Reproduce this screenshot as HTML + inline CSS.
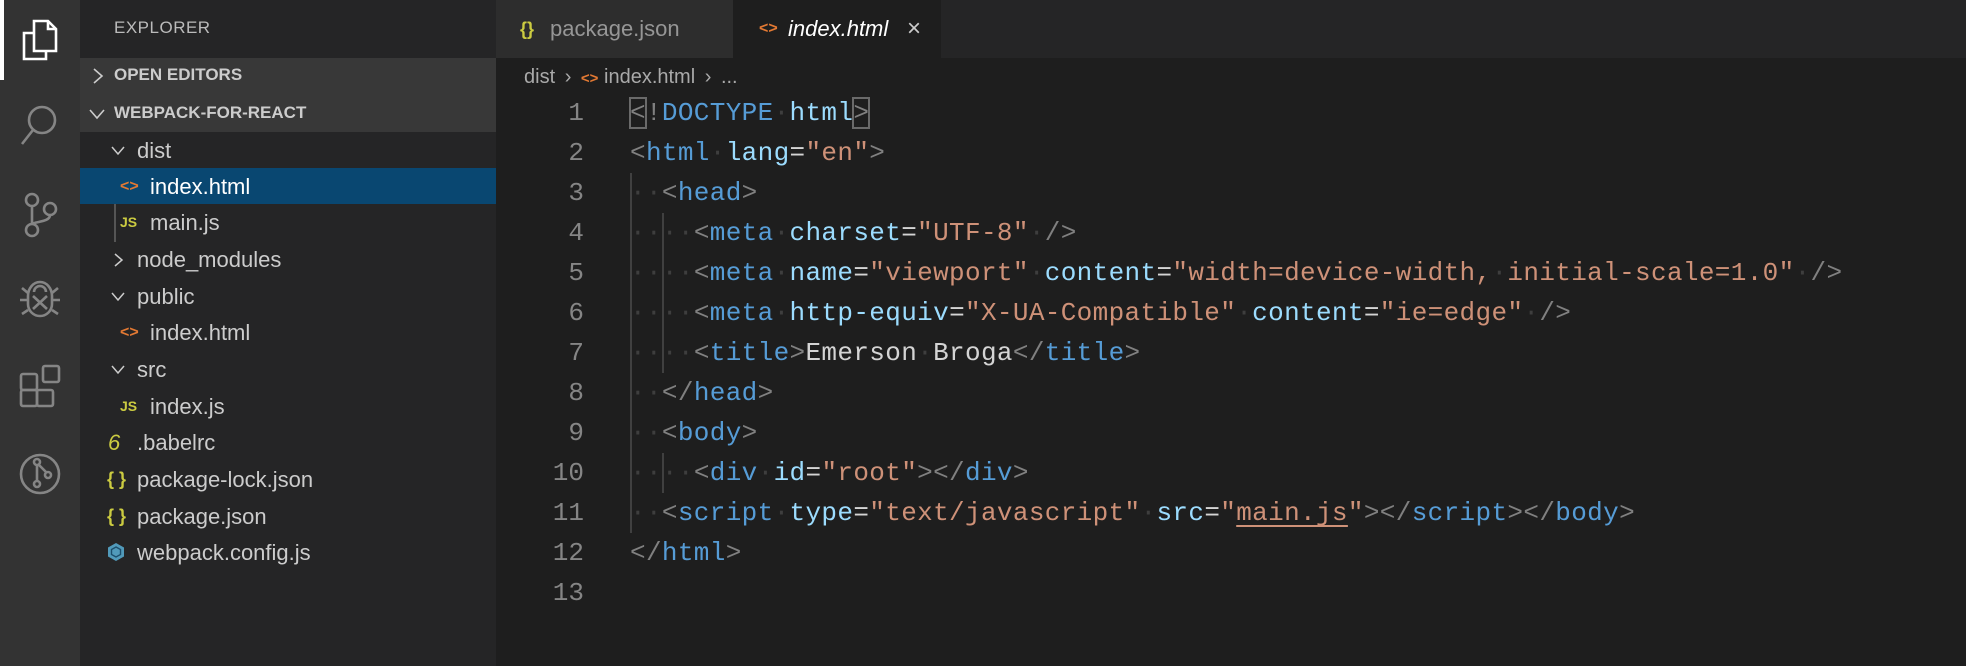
<!DOCTYPE html>
<html><head><meta charset="utf-8"><style>
*{margin:0;padding:0;box-sizing:border-box}
body{width:1966px;height:666px;background:#1e1e1e;position:relative;overflow:hidden;font-family:"Liberation Sans",sans-serif}
#act{position:absolute;left:0;top:0;width:80px;height:666px;background:#333}
#act .ind{position:absolute;left:0;top:0;width:4px;height:80px;background:#fff}
#act svg{position:absolute;left:0;}
#side{position:absolute;left:80px;top:0;width:416px;height:666px;background:#252526;color:#ccc}
.hdr{position:absolute;left:0;width:416px;background:#383838}
.row{position:absolute;left:0;width:416px;height:37px;line-height:37px;font-size:22px;color:#cccccc;white-space:nowrap}
.row .n{position:absolute}
.sel{background:#094771;color:#fff}
#tabs{position:absolute;left:496px;top:0;width:1470px;height:58px;background:#252526}
.tab{position:absolute;top:0;height:58px;line-height:58px;font-size:22px;white-space:nowrap}
#code{position:absolute;left:496px;top:93px;font-family:"Liberation Mono",monospace;font-size:26px;letter-spacing:0.35px}
.ln{position:absolute;left:0;width:88px;text-align:right;color:#858585;height:40px;line-height:40px;letter-spacing:0}
.cl{position:absolute;left:134px;height:40px;line-height:40px;white-space:pre}
.p{color:#808080}.t{color:#569cd6}.a{color:#9cdcfe}.s{color:#ce9178}.x{color:#d4d4d4}.w{color:#3e3e3e}
.box{outline:2px solid #6a6a6a;outline-offset:-1px}
.guide{position:absolute;width:2px;background:#404040}
.chev{position:absolute}
</style></head><body>
<div id="act">
<div class="ind"></div>
<svg width="80" height="520" viewBox="0 0 80 520" fill="none" stroke-width="2.6">
<g stroke="#ffffff"><path d="M34 21h14l8 8v22H34z"/><path d="M48 21v8h8"/><path d="M34 33h-10v26h22v-8"/></g>
<g stroke="#858585">
<circle cx="42" cy="120" r="13"/><path d="M33 130L22 144"/>
<circle cx="32" cy="200" r="6"/><circle cx="32" cy="230" r="6"/><circle cx="50" cy="209" r="6"/><path d="M32 206v18M50 215c0 8-18 6-18 10"/>
<path d="M28 296a12 14 0 0 1 24 0v8a12 12 0 0 1-24 0z"/><path d="M34 292a6 6 0 0 1 12 0M33 296l14 13M47 296l-14 13M20 300h8M52 300h8M22 288l6 5M58 288l-6 5M22 314l6-4M58 314l-6-4"/>
<rect x="21" y="374" width="16" height="16" rx="2"/><rect x="21" y="390" width="16" height="16" rx="2"/><rect x="37" y="390" width="16" height="16" rx="2"/><rect x="43" y="366" width="16" height="16" rx="2"/>
<circle cx="40" cy="474" r="19"/><circle cx="37" cy="462" r="3"/><circle cx="37" cy="484" r="3"/><circle cx="48" cy="475" r="3"/><path d="M37 465v16M38 464l9 9"/>
</g></svg>
</div>
<div id="side">
<div style="position:absolute;left:34px;top:18px;font-size:17px;color:#bbbbbb;letter-spacing:0.5px">EXPLORER</div>
<div class="hdr" style="top:58px;height:74px"></div>
<svg class="chev" style="left:10px;top:67px" width="16" height="18" viewBox="0 0 16 18"><path d="M4 2l8 7-8 7" fill="none" stroke="#ccc" stroke-width="1.6"/></svg>
<div style="position:absolute;left:34px;top:65px;font-size:17px;font-weight:bold;color:#cccccc">OPEN EDITORS</div>
<svg class="chev" style="left:8px;top:106px" width="18" height="16" viewBox="0 0 18 16"><path d="M2 4l7 8 7-8" fill="none" stroke="#ccc" stroke-width="1.6"/></svg>
<div style="position:absolute;left:34px;top:103px;font-size:17px;font-weight:bold;color:#cccccc">WEBPACK-FOR-REACT</div>
<div class="guide" style="left:34px;top:168px;height:74px;background:#555"></div>

<div class="row" style="top:132px"><svg class="n" style="left:30px;top:12px" width="16" height="14" viewBox="0 0 16 14"><path d="M2 3l6 7 6-7" fill="none" stroke="#ccc" stroke-width="1.5"/></svg><span class="n" style="left:57px">dist</span></div>
<div class="row sel" style="top:168px;height:36px"><span class="n" style="left:40px;color:#e37933;font-size:16px;font-weight:bold">&lt;&gt;</span><span class="n" style="left:70px">index.html</span></div>
<div class="row" style="top:204px"><span class="n" style="left:40px;color:#cbcb41;font-size:14px;font-weight:bold">JS</span><span class="n" style="left:70px">main.js</span></div>
<div class="row" style="top:241px"><svg class="n" style="left:32px;top:11px" width="14" height="16" viewBox="0 0 14 16"><path d="M3 2l7 6-7 6" fill="none" stroke="#ccc" stroke-width="1.5"/></svg><span class="n" style="left:57px">node_modules</span></div>
<div class="row" style="top:278px"><svg class="n" style="left:30px;top:12px" width="16" height="14" viewBox="0 0 16 14"><path d="M2 3l6 7 6-7" fill="none" stroke="#ccc" stroke-width="1.5"/></svg><span class="n" style="left:57px">public</span></div>
<div class="row" style="top:314px"><span class="n" style="left:40px;color:#e37933;font-size:16px;font-weight:bold">&lt;&gt;</span><span class="n" style="left:70px">index.html</span></div>
<div class="row" style="top:351px"><svg class="n" style="left:30px;top:12px" width="16" height="14" viewBox="0 0 16 14"><path d="M2 3l6 7 6-7" fill="none" stroke="#ccc" stroke-width="1.5"/></svg><span class="n" style="left:57px">src</span></div>
<div class="row" style="top:388px"><span class="n" style="left:40px;color:#cbcb41;font-size:14px;font-weight:bold">JS</span><span class="n" style="left:70px">index.js</span></div>
<div class="row" style="top:424px"><span class="n" style="left:28px;color:#cbcb41;font-style:italic;font-size:22px">6</span><span class="n" style="left:57px">.babelrc</span></div>
<div class="row" style="top:461px"><span class="n" style="left:27px;color:#cbcb41;font-size:18px;font-weight:bold">{ }</span><span class="n" style="left:57px">package-lock.json</span></div>
<div class="row" style="top:498px"><span class="n" style="left:27px;color:#cbcb41;font-size:18px;font-weight:bold">{ }</span><span class="n" style="left:57px">package.json</span></div>
<div class="row" style="top:534px"><svg class="n" style="left:26px;top:8px" width="20" height="20" viewBox="0 0 20 20"><path d="M10 1l8 4.5v9L10 19l-8-4.5v-9z" fill="#519aba"/><path d="M10 5l4.5 2.5v5L10 15l-4.5-2.5v-5z" fill="none" stroke="#1c4e6b" stroke-width="1.4"/></svg><span class="n" style="left:57px">webpack.config.js</span></div>
</div>

<div id="tabs">
<div class="tab" style="left:0;width:237px;background:#2d2d2d"><span style="position:absolute;left:24px;color:#cbcb41;font-size:18px;font-weight:bold">{}</span><span style="position:absolute;left:54px;color:#969696">package.json</span></div>
<div class="tab" style="left:237px;width:208px;background:#1e1e1e"><span style="position:absolute;left:26px;color:#e37933;font-size:16px;font-weight:bold">&lt;&gt;</span><span style="position:absolute;left:55px;color:#fff;font-style:italic">index.html</span><span style="position:absolute;left:174px;color:#ccc;font-size:24px">×</span></div>
</div>
<div style="position:absolute;left:524px;top:64px;font-size:20px;color:#a9a9a9;white-space:nowrap;line-height:26px">dist <span style="margin:0 4px">›</span> <span style="color:#e37933;font-size:15px;font-weight:bold">&lt;&gt;</span> index.html <span style="margin:0 4px">›</span> ...</div>

<div id="code">
<div class="guide" style="left:134px;top:80px;height:360px"></div>
<div class="guide" style="left:166px;top:120px;height:160px"></div>
<div class="guide" style="left:166px;top:360px;height:40px"></div>
<div class="ln" style="top:0">1</div><div class="cl" style="top:0"><span class="p box">&lt;</span><span class="p">!</span><span class="t">DOCTYPE</span><span class="w">·</span><span class="a">html</span><span class="p box">&gt;</span></div>
<div class="ln" style="top:40px">2</div><div class="cl" style="top:40px"><span class="p">&lt;</span><span class="t">html</span><span class="w">·</span><span class="a">lang</span><span class="x">=</span><span class="s">"en"</span><span class="p">&gt;</span></div>
<div class="ln" style="top:80px">3</div><div class="cl" style="top:80px"><span class="w">··</span><span class="p">&lt;</span><span class="t">head</span><span class="p">&gt;</span></div>
<div class="ln" style="top:120px">4</div><div class="cl" style="top:120px"><span class="w">····</span><span class="p">&lt;</span><span class="t">meta</span><span class="w">·</span><span class="a">charset</span><span class="x">=</span><span class="s">"UTF-8"</span><span class="w">·</span><span class="p">/&gt;</span></div>
<div class="ln" style="top:160px">5</div><div class="cl" style="top:160px"><span class="w">····</span><span class="p">&lt;</span><span class="t">meta</span><span class="w">·</span><span class="a">name</span><span class="x">=</span><span class="s">"viewport"</span><span class="w">·</span><span class="a">content</span><span class="x">=</span><span class="s">"width=device-width,</span><span class="w">·</span><span class="s">initial-scale=1.0"</span><span class="w">·</span><span class="p">/&gt;</span></div>
<div class="ln" style="top:200px">6</div><div class="cl" style="top:200px"><span class="w">····</span><span class="p">&lt;</span><span class="t">meta</span><span class="w">·</span><span class="a">http-equiv</span><span class="x">=</span><span class="s">"X-UA-Compatible"</span><span class="w">·</span><span class="a">content</span><span class="x">=</span><span class="s">"ie=edge"</span><span class="w">·</span><span class="p">/&gt;</span></div>
<div class="ln" style="top:240px">7</div><div class="cl" style="top:240px"><span class="w">····</span><span class="p">&lt;</span><span class="t">title</span><span class="p">&gt;</span><span class="x">Emerson</span><span class="w">·</span><span class="x">Broga</span><span class="p">&lt;/</span><span class="t">title</span><span class="p">&gt;</span></div>
<div class="ln" style="top:280px">8</div><div class="cl" style="top:280px"><span class="w">··</span><span class="p">&lt;/</span><span class="t">head</span><span class="p">&gt;</span></div>
<div class="ln" style="top:320px">9</div><div class="cl" style="top:320px"><span class="w">··</span><span class="p">&lt;</span><span class="t">body</span><span class="p">&gt;</span></div>
<div class="ln" style="top:360px">10</div><div class="cl" style="top:360px"><span class="w">····</span><span class="p">&lt;</span><span class="t">div</span><span class="w">·</span><span class="a">id</span><span class="x">=</span><span class="s">"root"</span><span class="p">&gt;&lt;/</span><span class="t">div</span><span class="p">&gt;</span></div>
<div class="ln" style="top:400px">11</div><div class="cl" style="top:400px"><span class="w">··</span><span class="p">&lt;</span><span class="t">script</span><span class="w">·</span><span class="a">type</span><span class="x">=</span><span class="s">"text/javascript"</span><span class="w">·</span><span class="a">src</span><span class="x">=</span><span class="s">"<span style="text-decoration:underline;text-decoration-color:#ce9178;text-underline-offset:5px">main.js</span>"</span><span class="p">&gt;&lt;/</span><span class="t">script</span><span class="p">&gt;&lt;/</span><span class="t">body</span><span class="p">&gt;</span></div>
<div class="ln" style="top:440px">12</div><div class="cl" style="top:440px"><span class="p">&lt;/</span><span class="t">html</span><span class="p">&gt;</span></div>
<div class="ln" style="top:480px">13</div>
</div>
</body></html>
